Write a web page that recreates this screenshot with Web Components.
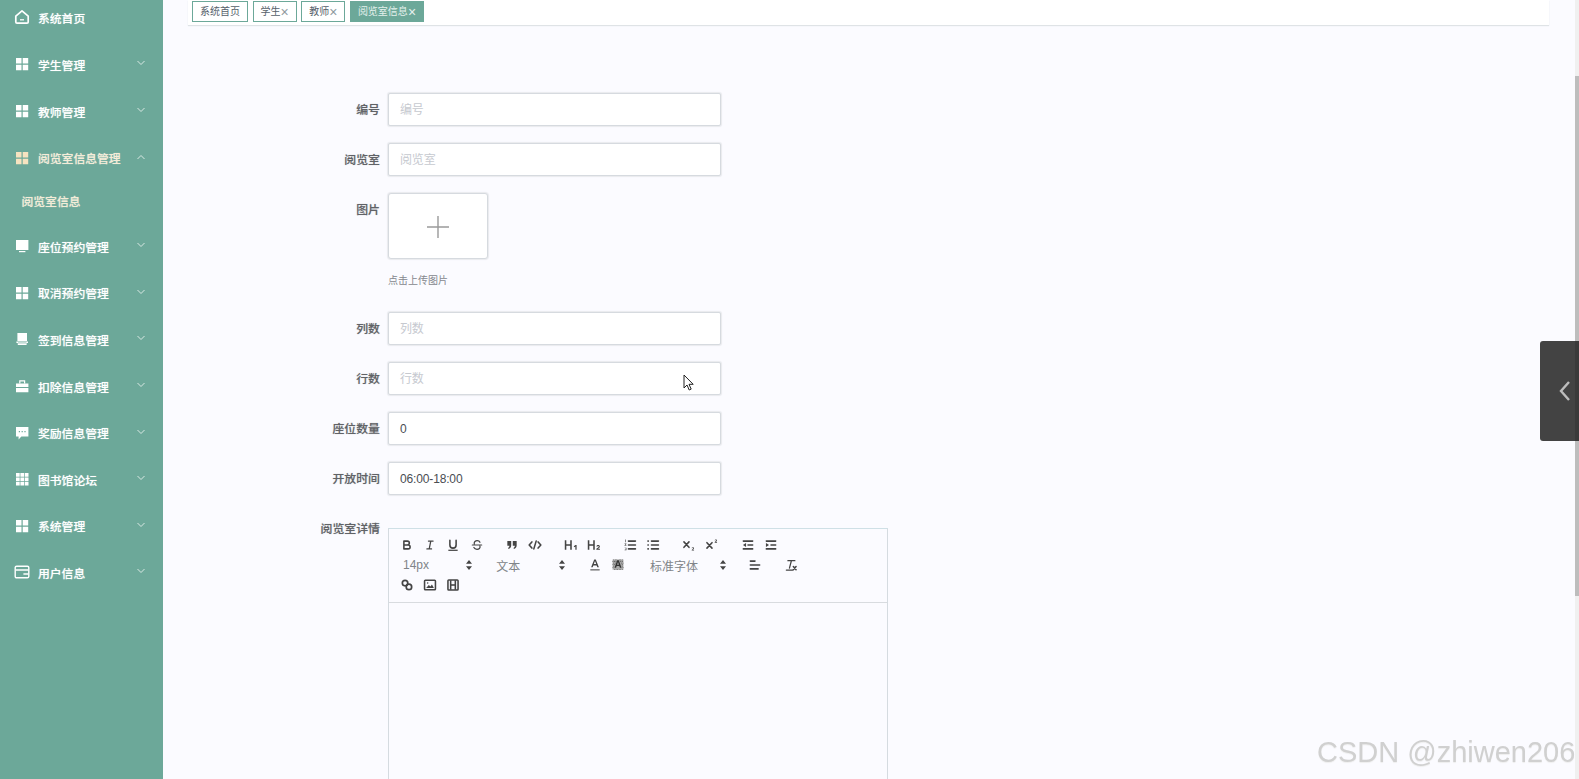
<!DOCTYPE html>
<html>
<head>
<meta charset="utf-8">
<title>阅览室信息</title>
<style>
  html, body { margin: 0; height: 100%; overflow: hidden; }
  body { font-family: "Liberation Sans", "Noto Sans CJK SC", sans-serif; background: #fbfbff; }
</style>
</head>
<body>
<app-shell>
  <app-sidebar slot="side">
    <side-item icon="home" top>系统首页</side-item>
    <side-item icon="grid" arrow="down">学生管理</side-item>
    <side-item icon="grid" arrow="down">教师管理</side-item>
    <side-item icon="grid" arrow="up" active>阅览室信息管理</side-item>
    <side-item sub active>阅览室信息</side-item>
    <side-item icon="monitor" arrow="down">座位预约管理</side-item>
    <side-item icon="grid" arrow="down">取消预约管理</side-item>
    <side-item icon="printer" arrow="down">签到信息管理</side-item>
    <side-item icon="case" arrow="down">扣除信息管理</side-item>
    <side-item icon="chat" arrow="down">奖励信息管理</side-item>
    <side-item icon="table" arrow="down">图书馆论坛</side-item>
    <side-item icon="grid" arrow="down">系统管理</side-item>
    <side-item icon="card" arrow="down">用户信息</side-item>
  </app-sidebar>
  <tab-bar>
    <tab-chip>系统首页</tab-chip>
    <tab-chip closable>学生</tab-chip>
    <tab-chip closable>教师</tab-chip>
    <tab-chip closable active>阅览室信息</tab-chip>
  </tab-bar>
  <form-row label="编号"><text-field placeholder="编号"></text-field></form-row>
  <form-row label="阅览室"><text-field placeholder="阅览室"></text-field></form-row>
  <form-row label="图片"><upload-box></upload-box></form-row>
  <form-row label="列数"><text-field placeholder="列数"></text-field></form-row>
  <form-row label="行数"><text-field placeholder="行数"></text-field></form-row>
  <form-row label="座位数量"><text-field value="0"></text-field></form-row>
  <form-row label="开放时间"><text-field value="06:00-18:00"></text-field></form-row>
  <form-row label="阅览室详情"><rich-editor></rich-editor></form-row>
</app-shell>
<page-overlays></page-overlays>

<script>
const sideIcons = {
  home: '<path d="M1.800 7.200 8 1.800l6.200 5.400V13a1.200 1.200 0 0 1-1.200 1.200H3A1.200 1.200 0 0 1 1.800 13z" fill="none" stroke="#fff" stroke-width="1.700" stroke-linejoin="round"/><path d="M6 10.800h4" stroke="#fff" stroke-width="1.300"/>',
  grid: '<path fill="#fff" d="M2 2h5.500v5.500H2zM8.700 2h5.500v5.500H8.700zM2 8.700h5.500v5.500H2zM8.700 8.700h5.500v5.500H8.700z"/>',
  monitor: '<path fill="#fff" d="M2 2h12.400v10H2z"/><path fill="#fff" d="M5 13h6.400v1.200H5z"/>',
  printer: '<path fill="#fff" d="M3.400 2h9.600v8H3.400zM2.400 10.600h11.600V12h-1.400v2H3.800v-2H2.400z"/><path fill="#6ca899" d="M4 11.600h8.400v.7H4z"/>',
  case: '<path fill="#fff" d="M2 5.500h12.400v3.600H2zM2 10h12.400v4.200H2z"/><path fill="none" stroke="#fff" stroke-width="1.200" d="M5.800 5.500V2.800h4.800v2.700"/>',
  chat: '<path fill="#fff" d="M2 2h12.400v9.600H7.400L4.600 14.400v-2.800H2z"/><path fill="#6ca899" d="M4.800 6h1.200v1.200H4.800zM7.600 6h1.200v1.200H7.600zM10.400 6h1.200v1.200h-1.200z"/>',
  table: '<path fill="#fff" d="M2 2h3.700v3.700H2zM6.400 2h3.700v3.700H6.400zM10.800 2h3.700v3.700h-3.700zM2 6.400h3.700v3.700H2zM6.400 6.400h3.700v3.700H6.400zM10.800 6.400h3.700v3.700h-3.700zM2 10.800h3.700v3.700H2zM6.400 10.800h3.700v3.700H6.400zM10.800 10.800h3.700v3.700h-3.700z"/>',
  card: '<rect x="1.200" y="2.200" width="13.600" height="11.600" rx="1.400" fill="none" stroke="#fff" stroke-width="1.400"/><path d="M1.500 6h13M9.400 10h5" stroke="#fff" stroke-width="1.300"/>'
}

class AppShell extends HTMLElement {
  constructor() {
    super()
    this.attachShadow({ mode: 'open' }).innerHTML = `
      <style>
        :host { display: flex; height: 100vh; overflow: hidden; }
        #main { flex: 1; min-width: 0; display: flex; flex-direction: column; gap: 17px; }
        ::slotted(tab-bar) { margin-bottom: 51px; }
      </style>
      <slot name="side"></slot>
      <div id="main"><slot></slot></div>`
  }
}

class AppSidebar extends HTMLElement {
  constructor() {
    super()
    this.attachShadow({ mode: 'open' }).innerHTML = `
      <style>
        :host { display: block; flex: none; width: 163px; background: #6ca899; }
      </style>
      <slot></slot>`
  }
}

class SideItem extends HTMLElement {
  connectedCallback() {
    if (this.shadowRoot) return
    const icon = this.getAttribute('icon')
    const arrow = this.getAttribute('arrow')
    this.attachShadow({ mode: 'open' }).innerHTML = `
      <style>
        :host { display: flex; align-items: center; height: 46.6px; color: #fff; font-size: 11.8px; font-weight: 500; text-shadow: 0 0 1px rgba(255,255,255,.55); padding-left: 14px; box-sizing: border-box; position: relative; }
        :host([top]) { height: 34px; margin-bottom: 7.200px; }
        :host([sub]) { height: 42px; padding: 0 0 3px 21.500px; color: #f3ecd6; }
        :host([active]:not([sub])) { color: #f5ecd7; }
        svg.icon { width: 16px; height: 16px; flex: none; margin-right: 8px; }
        svg.arrow { position: absolute; left: 136px; top: 50%; margin-top: -4px; width: 10px; height: 6px; }
      </style>
      ${icon ? `<svg class="icon" viewBox="0 0 16 16">${sideIcons[icon]}</svg>` : ''}
      <span><slot></slot></span>
      ${arrow ? `<svg class="arrow" viewBox="0 0 10 6"><path d="${arrow === 'up' ? 'M1.500 5 5 1.500 8.500 5' : 'M1.500 1 5 4.500 8.500 1'}" fill="none" stroke="#d9e9e4" stroke-width="1"/></svg>` : ''}`
    if (this.hasAttribute('active') && icon) {
      this.shadowRoot.querySelectorAll('svg.icon [fill="#fff"]').forEach((n) => n.setAttribute('fill', '#f6e3c0'))
    }
  }
}

class TabBar extends HTMLElement {
  constructor() {
    super()
    this.attachShadow({ mode: 'open' }).innerHTML = `
      <style>
        :host { display: flex; flex: none; align-items: flex-start; gap: 4.500px; height: 25px; margin: 0 30px 0 25px; padding: 1px 0 0 4px; box-sizing: border-box; background: #fff; box-shadow: 0 1px 1px #dfe3e6; }
      </style>
      <slot></slot>`
  }
}

class TabChip extends HTMLElement {
  connectedCallback() {
    if (this.shadowRoot) return
    const closable = this.hasAttribute('closable')
    this.attachShadow({ mode: 'open' }).innerHTML = `
      <style>
        :host { display: flex; align-items: center; height: 21px; padding: 0 7px; box-sizing: border-box; border: 1px solid #6ca899; background: #fff; color: #55606a; font-size: 10px; line-height: 19px; }
        :host([active]) { background: #6ca899; color: #e4f1ed; }
        span { font-size: 14px; line-height: 14px; color: #8f9a9e; }
        :host([active]) span { color: #e4f1ed; }
      </style>
      <slot></slot>${closable ? '<span>×</span>' : ''}`
  }
}

class FormRow extends HTMLElement {
  connectedCallback() {
    if (this.shadowRoot) return
    this.attachShadow({ mode: 'open' }).innerHTML = `
      <style>
        :host { display: flex; flex: none; align-items: flex-start; gap: 8px; }
        #label { width: 217px; height: 33px; flex: none; text-align: right; font-size: 11.900px; font-weight: 500; line-height: 34px; color: #606266; text-shadow: 0 0 1px rgba(96,98,102,.45); }
      </style>
      <div id="label">${this.getAttribute('label')}</div>
      <slot></slot>`
  }
}

class TextField extends HTMLElement {
  connectedCallback() {
    if (this.shadowRoot) return
    const value = this.getAttribute('value')
    const text = value || this.getAttribute('placeholder') || ''
    this.attachShadow({ mode: 'open' }).innerHTML = `
      <style>
        :host { display: block; width: 333px; height: 33px; box-sizing: border-box; border: 1px solid #d6dadf; border-radius: 2px; background: #fff; box-shadow: 0 0 1px 1px #e9eaee; padding-left: 11px; font-size: 12px; letter-spacing: -.15px; line-height: 32px; color: ${value ? '#4a4d52' : '#c6c9cf'}; }
      </style>
      ${text}`
  }
}

class UploadBox extends HTMLElement {
  constructor() {
    super()
    this.attachShadow({ mode: 'open' }).innerHTML = `
      <style>
        :host { display: block; height: 102px; }
        #box { width: 99.500px; height: 66px; box-sizing: border-box; border: 1px solid #d6dadf; border-radius: 3px; background: #fff; box-shadow: 0 0 1px 1px #e9eaee; display: flex; align-items: center; justify-content: center; padding-top: 2px; }
        #hint { margin-top: 15px; font-size: 10px; line-height: 14px; color: #85888e; }
        svg { width: 22px; height: 22px; }
      </style>
      <div id="box"><svg viewBox="0 0 22 22"><path d="M0 11h22M11 0v22" stroke="#9a9a9a" stroke-width="1.400"/></svg></div>
      <div id="hint">点击上传图片</div>`
  }
}

// quill snow toolbar glyphs, 18x18 box
const qs = 'fill="none" stroke="#444" stroke-width="2" stroke-linecap="round" stroke-linejoin="round"'
const qt = 'fill="none" stroke="#444" stroke-width="1.600" stroke-linecap="round" stroke-linejoin="round"'
const q = {
  bold: `<path ${qs} stroke-width="2.400" d="M5 4h4.500A2.500 2.500 0 0 1 9.500 9H5zM5 9h5.500a2.500 2.500 0 0 1 0 5H5z"/>`,
  italic: `<path ${qt} d="M7 4h6M5 14h6M10 4l-2 10"/>`,
  underline: `<path ${qs} d="M5 3v6a4 4 0 0 0 8 0V3"/><path d="M3 15h12v1.600H3z" fill="#444"/>`,
  strike: `<path ${qt} d="M5.500 7.500C5 5 7 3.500 9.200 3.500c1.800 0 3 .7 3.600 2M12.800 10.500c.7 2.500-1.300 4-3.800 4-2 0-3.300-.8-4-2.300M3 9h12"/>`,
  quote: '<path fill="#444" d="M3 4h5v5.500C8 12 6.500 13.500 4.500 14l-.5-1.300C5 12.300 5.600 11.500 5.700 10H3zM10 4h5v5.500C15 12 13.500 13.500 11.500 14l-.5-1.300c1-.4 1.600-1.200 1.700-2.700H10z"/>',
  code: `<path ${qs} d="M5 5 1.500 9 5 13M13 5l3.500 4-3.500 4M10.500 4l-3 10"/>`,
  h1: '<path fill="#444" d="M1 3h2v5h5V3h2v12H8v-5H3v5H1zM12.500 10.500l2.300-1.500h1.400v6h-1.600v-4l-1.300.8z"/>',
  h2: '<path fill="#444" d="M1 3h2v5h5V3h2v12H8v-5H3v5H1zM12 11c.1-1.300 1-2 2.300-2 1.400 0 2.300.8 2.300 1.900 0 .9-.6 1.500-1.300 2.100l-1 .8h2.400V15H12v-1.100l2.200-1.700c.6-.5.900-.9.900-1.300s-.3-.7-.7-.7c-.5 0-.8.300-.8.800z"/>',
  ol: `<path ${qs} d="M7 4h9M7 9h9M7 14h9"/><path fill="#444" d="M3 2h.8v3.600H3zM2 7.200h2.400v.6L3 9.400h1.500v.6H2v-.6l1.400-1.600H2zM2 12.400h2.400v3.400H2v-.6h1.700v-.8H2.600v-.6h1.100v-.8H2z"/>`,
  ul: `<path ${qs} d="M7 4h9M7 9h9M7 14h9M2.500 4h.5M2.500 9h.5M2.500 14h.5"/>`,
  sub: `<path ${qs} stroke-width="2.300" d="M2.500 5 9 12M9 5l-6.500 7"/><path fill="#444" d="M12.500 13.200c0-.9.700-1.400 1.500-1.400s1.500.5 1.500 1.300c0 .7-.4 1.100-1 1.500l-.7.6h1.700v.8h-3v-.7l1.400-1.300c.4-.3.600-.6.600-.9 0-.3-.2-.5-.5-.5-.4 0-.6.200-.6.600z"/>`,
  sup: `<path ${qs} stroke-width="2.300" d="M2.500 6 9 13M9 6l-6.500 7"/><path fill="#444" d="M12.500 3.200c0-.9.700-1.400 1.500-1.400s1.500.5 1.500 1.300c0 .7-.4 1.100-1 1.500l-.7.6h1.700v.8h-3v-.7l1.400-1.300c.4-.3.600-.6.600-.9 0-.3-.2-.5-.5-.5-.4 0-.6.200-.6.600z"/>`,
  outdent: `<path ${qs} d="M3 4h12M9 9h6M3 14h12"/><path fill="#444" d="M6.500 6.500v5L2.500 9z"/>`,
  indent: `<path ${qs} d="M3 4h12M9 9h6M3 14h12"/><path fill="#444" d="M2.500 6.500v5l4-2.500z"/>`,
  color: '<path fill="#444" d="M8 2h2l4 10h-2l-.9-2.500H6.900L6 12H4zM7.500 7.800h3L9 4z"/><path fill="#555" d="M3 14.500h12V16H3z"/>',
  background: '<path fill="#aaa" d="M2 2h14v13H2z"/><path fill="#555" d="M3 2h1v1H3zM5 2h1v1H5zM7 2h1v1H7zM10 2h1v1h-1zM12 2h1v1h-1zM14 2h1v1h-1zM2 4h1v1H2zM4 4h1v1H4zM6 4h1v1H6zM12 4h1v1h-1zM14 4h1v1h-1zM3 6h1v1H3zM5 6h1v1H5zM13 6h1v1h-1zM15 6h1v1h-1zM2 8h1v1H2zM4 8h1v1H4zM14 8h1v1h-1zM3 10h1v1H3zM14 10h1v1h-1zM2 12h1v1H2zM15 12h1v1h-1zM4 14h1v1H4zM6 14h1v1H6zM8 14h1v1H8zM10 14h1v1h-1zM12 14h1v1h-1zM14 14h1v1h-1z"/><path fill="#333" d="M8 3h2l3.500 9.500h-2l-.8-2.300H7.300l-.8 2.300h-2zM7.800 8.600h2.400L9 5z"/>',
  align: `<path ${qs} d="M3 4h6M3 9h12M3 14h10"/>`,
  clean: `<path ${qt} d="M5 3.500h9M9.500 3.500 7 13M3 15.500h8"/><path ${qs} d="m12 11 3.500 4M15.500 11 12 15"/>`,
  link: `<circle cx="6.500" cy="6.500" r="3.500" fill="none" stroke="#444" stroke-width="2.200"/><circle cx="11.500" cy="11.500" r="3.500" fill="none" stroke="#444" stroke-width="2.200"/>`,
  image: `<rect x="2" y="3" width="14" height="12" rx="1" fill="none" stroke="#444" stroke-width="2"/><path fill="#444" d="m4 13 3.500-4 2 2 2-2.500L14 13z"/><circle cx="6" cy="6.500" r="1" fill="#444"/>`,
  video: `<rect x="2.500" y="2.500" width="13" height="13" rx="1" fill="none" stroke="#444" stroke-width="2"/><path fill="#444" d="M5 3h2v12H5zM11 3h2v12h-2z"/><path fill="#444" d="M6 8h6v2H6z"/>`
}

class EditorButton extends HTMLElement {
  connectedCallback() {
    if (this.shadowRoot) return
    this.attachShadow({ mode: 'open' }).innerHTML = `
      <style>
        :host { display: flex; align-items: center; justify-content: center; width: 23.300px; height: 20px; flex: none; }
        svg { width: 14px; height: 14px; display: block; }
      </style>
      <svg viewBox="0 0 18 18">${q[this.getAttribute('name')]}</svg>`
  }
}

class EditorPicker extends HTMLElement {
  connectedCallback() {
    if (this.shadowRoot) return
    this.attachShadow({ mode: 'open' }).innerHTML = `
      <style>
        :host { display: flex; align-items: center; justify-content: space-between; height: 20px; flex: none; box-sizing: border-box; padding: 0 4px 0 8px; font-size: 12px; color: #808488; }
        svg { width: 6px; height: 10px; }
      </style>
      <slot></slot>
      <svg viewBox="0 0 6 10"><path fill="#444" d="M3 0 6 3.800H0zM3 10 0 6.200h6z"/></svg>`
    this.style.width = this.getAttribute('w') + 'px'
  }
}

class RichEditor extends HTMLElement {
  constructor() {
    super()
    const btns = (names) => `<div class="group">${names.map((n) => `<editor-button name="${n}"></editor-button>`).join('')}</div>`
    this.attachShadow({ mode: 'open' }).innerHTML = `
      <style>
        :host { display: block; width: 500px; height: 600px; margin-top: 16px; box-sizing: border-box; border: 1px solid #d5dbe0; border-top-color: #cfe0e6; }
        #bar { padding: 6px 6px 4px; height: 74px; box-sizing: border-box; border-bottom: 1px solid #d8dbdf; display: flex; flex-wrap: wrap; align-content: flex-start; }
        .group { display: flex; margin-right: 12.300px; }
        .br { flex-basis: 100%; height: 0; }
      </style>
      <div id="bar">
        ${btns(['bold', 'italic', 'underline', 'strike'])}
        ${btns(['quote', 'code'])}
        ${btns(['h1', 'h2'])}
        ${btns(['ol', 'ul'])}
        ${btns(['sub', 'sup'])}
        ${btns(['outdent', 'indent'])}
        <div class="br"></div>
        <div class="group"><editor-picker w="81">14px</editor-picker></div>
        <div class="group" style="margin-right:13.800px"><editor-picker w="81">文本</editor-picker></div>
        ${btns(['color', 'background'])}
        <div class="group" style="margin-right:13px"><editor-picker w="88.500">标准字体</editor-picker></div>
        ${btns(['align'])}
        ${btns(['clean'])}
        <div class="br"></div>
        ${btns(['link', 'image', 'video'])}
      </div>`
  }
}

class PageOverlays extends HTMLElement {
  constructor() {
    super()
    this.attachShadow({ mode: 'open' }).innerHTML = `
      <style>
        :host { display: block; }
        #track { position: fixed; top: 0; right: 0; bottom: 0; width: 4px; background: #f0f0f0; }
        #thumb { position: absolute; top: 76px; left: 0; width: 100%; height: 520px; background: #bdbdbd; }
        #handle { position: fixed; left: 1540px; top: 341px; width: 39px; height: 100px; background: linear-gradient(to right, #434343 35px, #3a3a3a 35px); border-radius: 3px 0 0 3px; display: flex; align-items: center; justify-content: flex-end; padding-right: 7px; box-sizing: border-box; }
        #handle svg { width: 14px; height: 22px; }
        #mark { position: fixed; left: 1317px; top: 736px; font-size: 29px; line-height: 32px; color: #d0d0d0; white-space: nowrap; text-shadow: 0 1px 1px #eee; }
        #cursor { position: fixed; left: 683px; top: 374px; width: 12px; height: 18px; }
      </style>
      <div id="track"><div id="thumb"></div></div>
      <div id="handle"><svg viewBox="0 0 14 22"><path d="M11 2 3 11l8 9" fill="none" stroke="#bdbdbd" stroke-width="2.400"/></svg></div>
      <div id="mark">CSDN @zhiwen206</div>
      <svg id="cursor" viewBox="0 0 12 18"><path d="M1 1v13l3-3 2.200 5 2-.9L6 10.300h4.200z" fill="#fff" stroke="#222" stroke-width="1"/></svg>`
  }
}

customElements.define('app-shell', AppShell)
customElements.define('app-sidebar', AppSidebar)
customElements.define('side-item', SideItem)
customElements.define('tab-bar', TabBar)
customElements.define('tab-chip', TabChip)
customElements.define('form-row', FormRow)
customElements.define('text-field', TextField)
customElements.define('upload-box', UploadBox)
customElements.define('editor-button', EditorButton)
customElements.define('editor-picker', EditorPicker)
customElements.define('rich-editor', RichEditor)
customElements.define('page-overlays', PageOverlays)
</script>
</body>
</html>
